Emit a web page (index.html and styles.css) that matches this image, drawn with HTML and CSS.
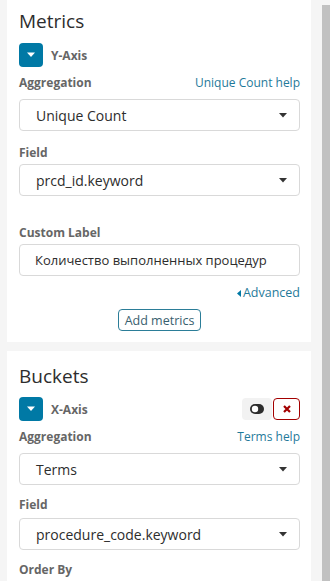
FILE: index.html
```html
<!DOCTYPE html>
<html lang="en">
  <head>
    <meta charset="UTF-8" />
    <meta name="viewport" content="width=device-width, initial-scale=1.0" />
    <title>Visualize editor</title>
    <link rel="stylesheet" href="styles.css">
  </head>
  <body>
    <div class="layout">
      <div class="editor">
        <div class="panel metrics">
          <h2>Metrics</h2>
          <div class="agg-header">
            <button class="toggle-btn" type="button">
              <svg width="10" height="6" viewBox="0 0 10 6"><path d="M1 0.5h8L5 5z" fill="#fff"/></svg>
            </button>
            <span class="agg-title">Y-Axis</span>
          </div>

          <div class="form-group">
            <div class="label-row">
              <span class="label">Aggregation</span>
              <a class="link">Unique Count help</a>
            </div>
            <div class="select">
              <span>Unique Count</span>
              <svg class="caret" width="8" height="5" viewBox="0 0 8 5"><path d="M0 0h8L4 4.5z" fill="#333"/></svg>
            </div>
          </div>

          <div class="form-group">
            <div class="label">Field</div>
            <div class="select">
              <span>prcd_id.keyword</span>
              <svg class="caret" width="8" height="5" viewBox="0 0 8 5"><path d="M0 0h8L4 4.5z" fill="#333"/></svg>
            </div>
          </div>

          <div class="form-group custom">
            <div class="label">Custom Label</div>
            <div class="select input">Количество выполненных процедур</div>
          </div>

          <div class="advanced">
            <a class="link">
              <svg width="4" height="7" viewBox="0 0 4 7"><path d="M4 0v7L0 3.5z" fill="#0079a5"/></svg>
              Advanced
            </a>
          </div>

          <div class="add-row">
            <button class="add-btn" type="button">Add metrics</button>
          </div>
        </div>

        <div class="panel buckets">
          <h2>Buckets</h2>
          <div class="agg-header">
            <button class="toggle-btn" type="button">
              <svg width="10" height="6" viewBox="0 0 10 6"><path d="M1 0.5h8L5 5z" fill="#fff"/></svg>
            </button>
            <span class="agg-title">X-Axis</span>
            <div class="agg-actions">
              <button class="enable-btn" type="button">
                <svg width="14" height="10" viewBox="0 0 14 10"><rect x="0" y="0" width="14" height="10" rx="5" fill="#2d2d2d"/><circle cx="5" cy="5" r="3.2" fill="#fff"/></svg>
              </button>
              <button class="remove-btn" type="button">
                <svg width="8" height="8" viewBox="0 0 8 8"><path d="M1 1l6 6M7 1L1 7" stroke="#a30000" stroke-width="2.2"/></svg>
              </button>
            </div>
          </div>

          <div class="form-group">
            <div class="label-row">
              <span class="label">Aggregation</span>
              <a class="link">Terms help</a>
            </div>
            <div class="select">
              <span>Terms</span>
              <svg class="caret" width="8" height="5" viewBox="0 0 8 5"><path d="M0 0h8L4 4.5z" fill="#333"/></svg>
            </div>
          </div>

          <div class="form-group">
            <div class="label">Field</div>
            <div class="select">
              <span>procedure_code.keyword</span>
              <svg class="caret" width="8" height="5" viewBox="0 0 8 5"><path d="M0 0h8L4 4.5z" fill="#333"/></svg>
            </div>
          </div>

          <div class="form-group">
            <div class="label">Order By</div>
          </div>
        </div>
      </div>
      <div class="scrollbar"></div>
    </div>
  </body>
</html>
```

FILE: styles.css
```css
* {
  box-sizing: border-box;
}
body {
  margin: 0;
  font-family: "Open Sans", "Liberation Sans", sans-serif;
  background-color: #f5f5f5;
  color: #2d2d2d;
  overflow: hidden;
}
.layout {
  display: flex;
  height: 581px;
}
.editor {
  width: 322px;
  padding: 0 11px 0 7px;
  margin-top: -4px; /* scrolled a little */
}
.scrollbar {
  width: 8px;
  margin-top: 5px;
  background-color: #c1c1c1;
}
.panel {
  background-color: #fff;
  padding: 13px 11px 12px 12px;
  margin-bottom: 9px;
}
.metrics {
  padding-bottom: 11px;
}
h2 {
  font-size: 19px;
  font-weight: 400;
  line-height: 24px;
  margin: 0 0 10px;
  color: #2d2d2d;
}
.buckets h2 {
  margin-bottom: 9px;
}
.agg-header {
  display: flex;
  align-items: center;
  height: 24px;
  margin-bottom: 7px;
}
.toggle-btn {
  width: 24px;
  height: 24px;
  border: none;
  border-radius: 4px;
  background-color: #0079a5;
  display: flex;
  align-items: center;
  justify-content: center;
  padding: 0;
}
.agg-title {
  margin-left: 8px;
  font-size: 12px;
  font-weight: 700;
  color: #666;
}
.agg-actions {
  margin-left: auto;
  display: flex;
  gap: 1px;
}
.enable-btn {
  width: 30px;
  height: 22px;
  border: none;
  border-radius: 4px;
  background-color: #f2f2f2;
  display: flex;
  align-items: center;
  justify-content: center;
  padding: 0;
}
.remove-btn {
  width: 27px;
  height: 22px;
  border: 1px solid #a30000;
  border-radius: 4px;
  background-color: #fff;
  display: flex;
  align-items: center;
  justify-content: center;
  padding: 0;
}
.form-group {
  margin-bottom: 13px;
}
.buckets .form-group {
  margin-bottom: 11px;
}
.form-group.custom {
  margin-top: 28px;
  margin-bottom: 8px;
}
.label-row {
  display: flex;
  justify-content: space-between;
  align-items: baseline;
  margin-bottom: 7px;
}
.label {
  font-size: 12px;
  font-weight: 700;
  line-height: 18px;
  color: #666;
}
.form-group > .label {
  margin-bottom: 2px;
}
.buckets .form-group > .label {
  margin-bottom: 4px;
}
.link {
  font-size: 12px;
  line-height: 18px;
  color: #1f7a9a;
  text-decoration: none;
}
.select {
  height: 32px;
  border: 1px solid #d9d9d9;
  border-radius: 4px;
  display: flex;
  align-items: center;
  justify-content: space-between;
  padding: 0 12px 0 16px;
  font-size: 14px;
  color: #2d2d2d;
}
.select.input {
  padding-left: 15px;
  font-size: 13px;
  white-space: nowrap;
  overflow: hidden;
}
.advanced {
  display: flex;
  justify-content: flex-end;
  margin-bottom: 7px;
}
.advanced .link {
  font-size: 12.5px;
  display: flex;
  align-items: center;
  gap: 2px;
}
.add-row {
  display: flex;
  justify-content: center;
}
.add-btn {
  height: 22px;
  padding: 0 6px;
  border: 1px solid #2b7d98;
  border-radius: 4px;
  background-color: #fff;
  font-family: "Open Sans", "Liberation Sans", sans-serif;
  font-size: 12.5px;
  color: #38606e;
}
```
